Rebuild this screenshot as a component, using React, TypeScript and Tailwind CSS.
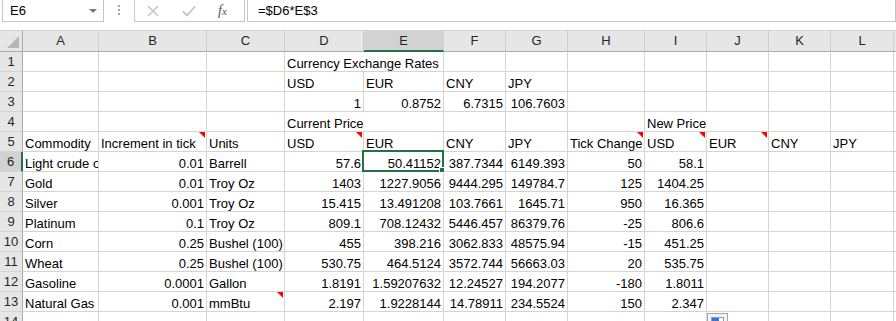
import clsx from "clsx";

type Cell = { v: string; n?: boolean; span?: number; note?: boolean };

const COLS = ["A", "B", "C", "D", "E", "F", "G", "H", "I", "J", "K", "L", ""];

const t = (v: string, note = false): Cell => ({ v, note });
const n = (v: string): Cell => ({ v, n: true });

// 8 commodity rows: name, tick, units, usd, eur, cny, jpy, tick change, new usd
const data: string[][] = [
  ["Light crude oil", "0.01", "Barrell", "57.6", "50.41152", "387.7344", "6149.393", "50", "58.1"],
  ["Gold", "0.01", "Troy Oz", "1403", "1227.9056", "9444.295", "149784.7", "125", "1404.25"],
  ["Silver", "0.001", "Troy Oz", "15.415", "13.491208", "103.7661", "1645.71", "950", "16.365"],
  ["Platinum", "0.1", "Troy Oz", "809.1", "708.12432", "5446.457", "86379.76", "-25", "806.6"],
  ["Corn", "0.25", "Bushel (100)", "455", "398.216", "3062.833", "48575.94", "-15", "451.25"],
  ["Wheat", "0.25", "Bushel (100)", "530.75", "464.5124", "3572.744", "56663.03", "20", "535.75"],
  ["Gasoline", "0.0001", "Gallon", "1.8191", "1.59207632", "12.24527", "194.2077", "-180", "1.8011"],
  ["Natural Gas", "0.001", "mmBtu", "2.197", "1.9228144", "14.78911", "234.5524", "150", "2.347"],
];

const rows: Record<string, Cell>[] = [
  { D: { v: "Currency Exchange Rates", span: 2 } },
  { D: t("USD"), E: t("EUR"), F: t("CNY"), G: t("JPY") },
  { D: n("1"), E: n("0.8752"), F: n("6.7315"), G: n("106.7603") },
  { D: { v: "Current Price", span: 2 }, I: { v: "New Price", span: 2 } },
  {
    A: t("Commodity"),
    B: t("Increment in tick", true),
    C: t("Units"),
    D: t("USD", true),
    E: t("EUR"),
    F: t("CNY"),
    G: t("JPY"),
    H: t("Tick Change", true),
    I: t("USD", true),
    J: t("EUR", true),
    K: t("CNY"),
    L: t("JPY"),
  },
  ...data.map((d, i) => ({
    A: t(d[0]),
    B: n(d[1]),
    C: t(d[2], i === 7),
    D: n(d[3]),
    E: n(d[4]),
    F: n(d[5]),
    G: n(d[6]),
    H: n(d[7]),
    I: n(d[8]),
  })),
  {},
];

function RedNote() {
  return (
    <span className="absolute right-[1px] top-0 h-0 w-0 border-l-[6px] border-t-[6px] border-l-transparent border-t-[#ff0000]" />
  );
}

function GridCell({ cell, selected }: { cell?: Cell; selected?: boolean }) {
  return (
    <div
      className={clsx(
        "relative flex min-w-0 items-end border-b border-r border-[#d4d4d4] text-[13px] leading-[15px] text-black",
        cell?.n ? "justify-end pr-[2px]" : "pl-[2px]",
        cell?.span === 2 && "col-span-2"
      )}
    >
      {cell ? (
        <span className="block min-w-0 overflow-hidden whitespace-nowrap">{cell.v}</span>
      ) : null}
      {cell?.note ? <RedNote /> : null}
      {selected ? (
        <>
          <span className="absolute -left-[2px] -top-[2px] -right-[1px] -bottom-[1px] z-10 border-2 border-[#217346]" />
          <span className="absolute -right-[2px] -bottom-[2px] z-20 h-[6px] w-[6px] border border-white bg-[#217346]" />
        </>
      ) : null}
    </div>
  );
}

export default function App() {
  return (
    <div className="relative h-[321px] w-[896px] overflow-hidden bg-white font-['Liberation_Sans',Arial,sans-serif]">
      {/* formula bar */}
      <div className="flex h-[30px] items-start">
        <div className="ml-[2px] mt-[-1px] flex h-[23px] w-[102px] items-center justify-between border border-[#c6c6c6] bg-white pl-[7px] pr-[6px] text-[13px] text-black">
          <span>E6</span>
          <span className="h-0 w-0 border-l-[4px] border-r-[4px] border-t-[4px] border-l-transparent border-r-transparent border-t-[#7a7a7a]" />
        </div>
        <div className="ml-[14px] mt-[5px] flex flex-col gap-[2px]">
          <span className="h-[2px] w-[2px] bg-[#a6a6a6]" />
          <span className="h-[2px] w-[2px] bg-[#a6a6a6]" />
          <span className="h-[2px] w-[2px] bg-[#a6a6a6]" />
        </div>
        <div className="ml-[14px] mt-[-1px] flex h-[23px] w-[111px] items-center border border-[#c6c6c6] bg-white">
          <svg width="12" height="12" viewBox="0 0 12 12" className="ml-[12px]">
            <path d="M1 1 L11 11 M11 1 L1 11" stroke="#c2c2c2" strokeWidth="1.4" fill="none" />
          </svg>
          <svg width="14" height="12" viewBox="0 0 14 12" className="ml-[23px]">
            <path d="M1 6.5 L5 10.5 L13 1.5" stroke="#c2c2c2" strokeWidth="1.8" fill="none" />
          </svg>
          <span className="ml-[22px] font-['Liberation_Serif',serif] text-[14px] italic leading-none text-[#555]">
            f<span className="text-[11px]">x</span>
          </span>
        </div>
        <div className="ml-[2px] mt-[-1px] flex h-[23px] flex-1 items-center border border-[#c6c6c6] bg-white pl-[10px] text-[13px] text-black">
          =$D6*E$3
        </div>
      </div>

      {/* sheet */}
      <div className="grid grid-cols-[23px_76px_108px_78px_79px_80px_62px_62px_77px_62px_62px_62px_63px_1fr] grid-rows-[22px_repeat(14,20px)]">
        <div className="relative border-b border-r border-t border-b-[#ababab] border-r-[#ababab] border-t-[#d4d4d4] bg-[#e6e6e6]">
          <span className="absolute bottom-[3px] right-[3px] h-0 w-0 border-b-[12px] border-l-[12px] border-b-[#b7b7b7] border-l-transparent" />
        </div>
        {COLS.map((c) => (
          <div
            key={c || "M"}
            className={clsx(
              "flex items-center justify-center border-r border-t border-r-[#cfcfcf] border-t-[#d4d4d4] text-[13px] text-[#262626]",
              c === "E"
                ? "border-b-2 border-b-[#217346] bg-[#d2d2d2]"
                : "border-b border-b-[#ababab] bg-[#e6e6e6]"
            )}
          >
            {c}
          </div>
        ))}

        {rows.map((r, i) => {
          const num = i + 1;
          const cells = [];
          for (let k = 0; k < COLS.length; k++) {
            const key = COLS[k];
            const cell = key ? r[key] : undefined;
            cells.push(
              <GridCell key={k} cell={cell} selected={num === 6 && key === "E"} />
            );
            if (cell?.span === 2) k++;
          }
          return (
            <div key={num} className="contents">
              <div
                className={clsx(
                  "flex items-center justify-center border-b border-[#d4d4d4] text-[13px] text-[#262626]",
                  num === 6
                    ? "border-r-2 border-r-[#217346] bg-[#d2d2d2]"
                    : "border-r border-r-[#ababab] bg-[#e6e6e6]"
                )}
              >
                {num}
              </div>
              {cells}
            </div>
          );
        })}
      </div>

      {/* quick analysis button */}
      <div className="absolute left-[707px] top-[313px] flex h-[14px] w-[21px] items-start justify-center border border-[#a6a6a6] bg-[#f3f3f3] pt-[3px]">
        <div className="flex h-[5px] w-[13px] border border-[#7f9fd6]">
          <span className="w-[7px] bg-[#3b73d6]" />
          <span className="flex-1 bg-white" />
        </div>
      </div>
    </div>
  );
}
